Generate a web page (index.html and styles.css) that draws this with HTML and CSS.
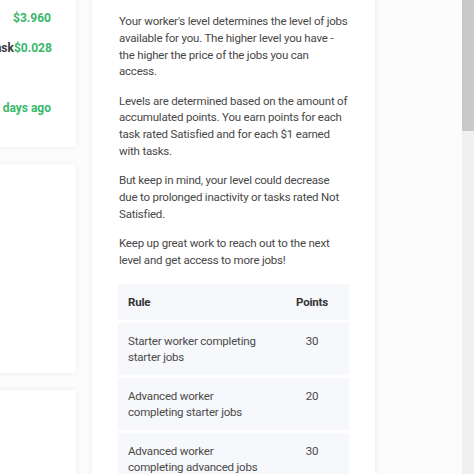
FILE: index.html
```html
<!DOCTYPE html>
<html lang="en">
<head>
<meta charset="utf-8">
<title>Worker levels</title>
<link rel="stylesheet" href="styles.css">
</head>
<body>
<div class="window">
  <div class="viewport">
    <div class="layout">
      <aside class="side">
        <div class="card stats">
          <div class="stat"><span class="label">Total earned</span><span class="value">$3.960</span></div>
          <div class="stat"><span class="label">Average price per task</span><span class="value">$0.028</span></div>
          <div class="stat"><span class="label">Level</span><span class="value"></span></div>
          <div class="stat"><span class="label">Last task</span><span class="value">2 days ago</span></div>
        </div>
        <div class="card blank"></div>
        <div class="card blank"></div>
      </aside>
      <main class="card main">
        <p>Your worker's level determines the level of jobs available for you. The higher level you have - the higher the price of the jobs you can access.</p>
        <p>Levels are determined based on the amount of accumulated points. You earn points for each task rated Satisfied and for each $1 earned with tasks.</p>
        <p>But keep in mind, your level could decrease due to prolonged inactivity or tasks rated Not Satisfied.</p>
        <p>Keep up great work to reach out to the next level and get access to more jobs!</p>
        <table class="rules">
          <thead>
            <tr><th class="rule">Rule</th><th class="pts">Points</th></tr>
          </thead>
          <tbody>
            <tr><td class="rule">Starter worker completing starter jobs</td><td class="pts">30</td></tr>
            <tr><td class="rule">Advanced worker completing starter jobs</td><td class="pts">20</td></tr>
            <tr><td class="rule">Advanced worker completing advanced jobs</td><td class="pts">30</td></tr>
            <tr><td class="rule">Each $1 earned with tasks</td><td class="pts">10</td></tr>
          </tbody>
        </table>
      </main>
    </div>
  </div>
  <div class="scrollbar"><div class="thumb"></div></div>
</div>
</body>
</html>
```

FILE: styles.css
```css
html, body {
  margin: 0;
  padding: 0;
}
body {
  background: #fcfcfc;
  font-family: Roboto, "Liberation Sans", Arial, sans-serif;
  color: #474747;
}
.window {
  display: flex;
  height: 474px;
  overflow: hidden;
}
.viewport {
  flex: 1;
  overflow: hidden;
}
.scrollbar {
  width: 12px;
  flex: none;
  background: #f0f0f0;
}
.thumb {
  height: 131px;
  background: #c9c9c9;
}
.layout {
  display: flex;
  align-items: flex-start;
  gap: 16px;
  margin-top: -20px;
  margin-left: -132px;
}
.card {
  background: #ffffff;
  box-shadow: 0 0 6px rgba(0, 0, 0, 0.07);
  border-radius: 3px;
}
.side {
  width: 208px;
  display: flex;
  flex-direction: column;
  gap: 17px;
}
.stats {
  padding: 30px 25px 31px 25px;
  display: flex;
  flex-direction: column;
  gap: 14px;
}
.stat {
  display: flex;
  justify-content: space-between;
  font-size: 12px;
  line-height: 16px;
  font-weight: 700;
  white-space: nowrap;
}
.label {
  color: #3a3a3a;
}
.value {
  color: #38b86a;
}
.blank {
  height: 209px;
}
.main {
  width: 229px;
  padding: 33px 27px 40px 27px;
  min-height: 600px;
}
.main p {
  margin: 0 0 12.5px 0;
  font-size: 11.5px;
  letter-spacing: -0.2px;
  line-height: 16.75px;
}
.rules {
  width: 231px;
  margin-left: -1px;
  border-collapse: separate;
  border-spacing: 0 3px;
  font-size: 11.5px;
  letter-spacing: -0.2px;
  line-height: 16px;
}
.rules th, .rules td {
  background: #f6f8fb;
  padding: 10px 10px;
  vertical-align: top;
}
.rules th {
  font-weight: 700;
  color: #333333;
  text-align: left;
}
.rules .pts {
  width: 54px;
  text-align: center;
}
.rules td.rule {
  color: #4a4a4a;
}
```
